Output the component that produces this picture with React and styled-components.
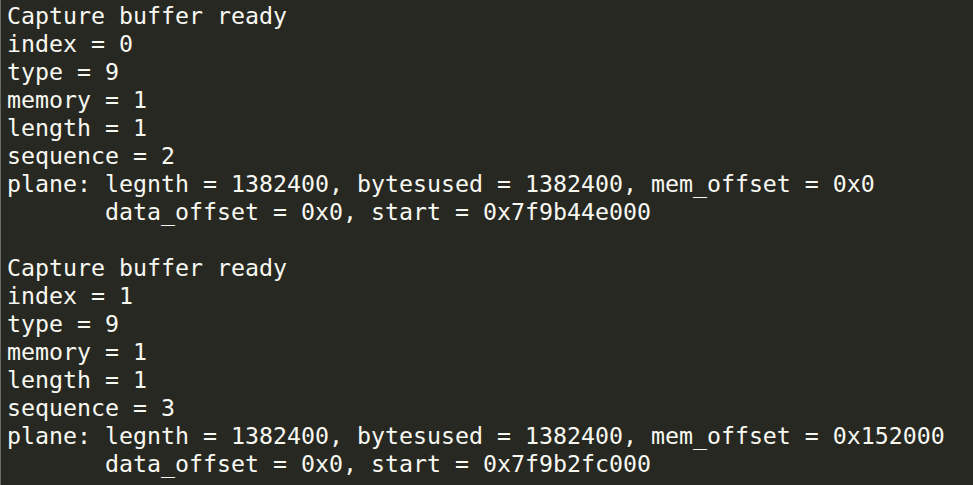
import React from 'react'
import styled, { createGlobalStyle } from 'styled-components'

const GlobalStyle = createGlobalStyle`
    html, body {
        margin: 0;
        padding: 0;
        background-color: #272822;
    }
`
const Terminal = styled.div`
    width: 973px;
    height: 485px;
    box-sizing: border-box;
    background-color: #272822;
    border-left: 1px solid #6b6b66;
    padding: 2px 0 0 6px;
    overflow: hidden;
`
const Line = styled.div`
    font-family: "DejaVu Sans Mono", "Liberation Mono", monospace;
    font-size: 23.25px;
    line-height: 28px;
    height: 28px;
    color: #f8f8f2;
    white-space: pre;
`

const buffers = [
    { index: 0, sequence: 2, memOffset: '0x0', start: '0x7f9b44e000' },
    { index: 1, sequence: 3, memOffset: '0x152000', start: '0x7f9b2fc000' },
]

const App = () => {
    const lines = []
    buffers.forEach((buf, i) => {
        if (i > 0) lines.push('')
        lines.push('Capture buffer ready')
        lines.push(`index = ${buf.index}`)
        lines.push('type = 9')
        lines.push('memory = 1')
        lines.push('length = 1')
        lines.push(`sequence = ${buf.sequence}`)
        lines.push(`plane: legnth = 1382400, bytesused = 1382400, mem_offset = ${buf.memOffset}`)
        lines.push(`       data_offset = 0x0, start = ${buf.start}`)
    })

    return (
        <>
            <GlobalStyle />
            <Terminal>
                {lines.map((text, i) => (
                    <Line key={i}>{text}</Line>
                ))}
            </Terminal>
        </>
    )
}

export default App
